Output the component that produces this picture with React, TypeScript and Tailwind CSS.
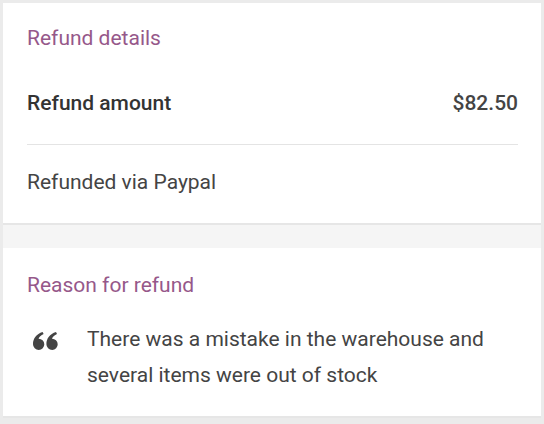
export default function App() {
  return (
    <div
      className="min-h-[424px] bg-[#ebebeb] px-[3px] pt-[3px]"
      style={{ fontFamily: "Roboto, 'Liberation Sans', sans-serif" }}
    >
      {/* Refund details */}
      <section className="border-b-2 border-[#e6e6e6] bg-white pl-[24px] pr-[23px] pt-[23px] pb-[29px]">
        <h2 className="text-[21px] leading-[24px] text-[#96588a]">Refund details</h2>
        <div className="mt-[41px] flex items-center justify-between border-b border-[#e4e4e4] pb-[29px] text-[21px] leading-[24px] text-[#333]">
          <span className="font-medium">Refund amount</span>
          <span className="font-medium text-[#444]">$82.50</span>
        </div>
        <p className="mt-[25px] text-[21px] leading-[24px] text-[#444]">Refunded via Paypal</p>
      </section>

      <div className="h-[23px] bg-[#f5f5f5]" />

      {/* Reason for refund */}
      <section className="border-b-2 border-[#e6e6e6] bg-white pl-[24px] pr-[23px] pt-[25px] pb-[23px]">
        <h2 className="text-[21px] leading-[24px] text-[#96588a]">Reason for refund</h2>
        <div className="mt-[24px] flex gap-[29px]">
          <svg width="25" height="18" viewBox="0 0 25 18" className="mt-[11px] ml-[6px] shrink-0 fill-[#444]">
            <path d="M5.8 18A5.8 5.8 0 0 1 0 12.2C0 6.5 3.4 2 9.6 0l1 1.9C7.4 3.4 5.8 5.3 5.6 6.8A5.6 5.6 0 1 1 5.8 18Z" />
            <path d="M19.2 18a5.8 5.8 0 0 1-5.8-5.8C13.4 6.5 16.8 2 23 0l1 1.9C20.8 3.4 19.2 5.3 19 6.8A5.6 5.6 0 1 1 19.2 18Z" />
          </svg>
          <p className="text-[21px] leading-[36px] text-[#444]">
            There was a mistake in the warehouse and several items were out of stock
          </p>
        </div>
      </section>
    </div>
  );
}
